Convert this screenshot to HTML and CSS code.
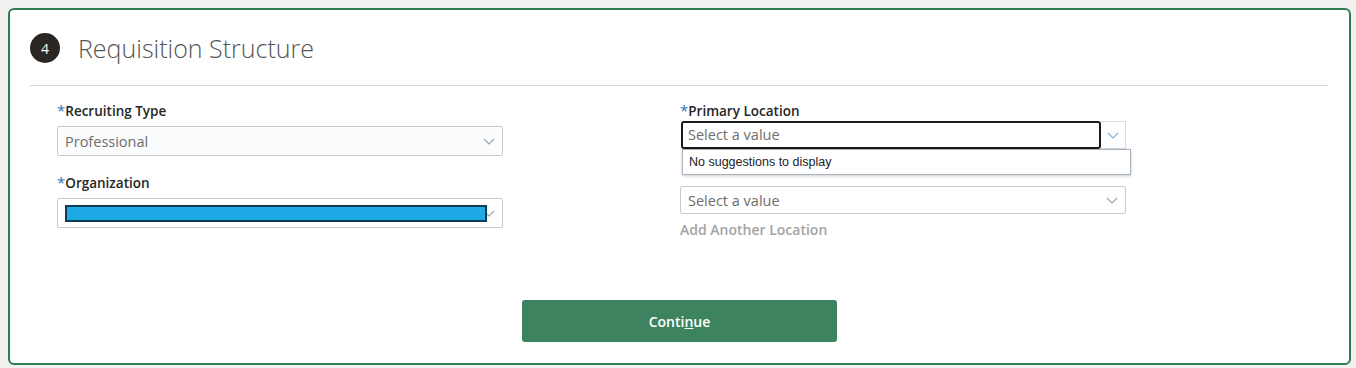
FILE: index.html
```html
<!DOCTYPE html>
<html lang="en">
<head>
    <meta charset="UTF-8">
    <meta name="viewport" content="width=device-width, initial-scale=1.0">
    <title>Requisition Structure</title>
    <link rel="stylesheet" href="styles.css">
</head>
<body>

    <div class="card">
        <div class="header">
            <span class="step">4</span>
            <h2>Requisition Structure</h2>
        </div>
        <div class="divider"></div>

        <div class="fields">
            <div class="column">
                <label class="label"><span class="req">*</span>Recruiting Type</label>
                <div class="select readonly">
                    <span class="value">Professional</span>
                    <span class="chevron"><svg width="12" height="7" viewBox="0 0 12 7"><path d="M1 1l5 5 5-5" fill="none" stroke="#9aa3ab" stroke-width="1.2"/></svg></span>
                </div>

                <label class="label second"><span class="req">*</span>Organization</label>
                <div class="select">
                    <span class="redacted"></span>
                    <span class="chevron"><svg width="12" height="7" viewBox="0 0 12 7"><path d="M1 1l5 5 5-5" fill="none" stroke="#9aa3ab" stroke-width="1.2"/></svg></span>
                </div>
            </div>

            <div class="column">
                <label class="label tight"><span class="req">*</span>Primary Location</label>
                <div class="combo">
                    <div class="focused">Select a value</div>
                    <span class="combo-btn"><svg width="12" height="7" viewBox="0 0 12 7"><path d="M1 1l5 5 5-5" fill="none" stroke="#7eb2dc" stroke-width="1.2"/></svg></span>
                    <div class="suggestions">No suggestions to display</div>
                </div>

                <div class="select short">
                    <span class="value">Select a value</span>
                    <span class="chevron"><svg width="12" height="7" viewBox="0 0 12 7"><path d="M1 1l5 5 5-5" fill="none" stroke="#9aa3ab" stroke-width="1.2"/></svg></span>
                </div>
                <a class="add-link">Add Another Location</a>
            </div>
        </div>

        <div class="actions">
            <button class="continue">Conti<u>n</u>ue</button>
        </div>
    </div>

</body>
</html>
```

FILE: styles.css
```css
body {
    font-family: "Open Sans", Arial, sans-serif;
    background-color: #f2f1ef;
    margin: 0;
    height: 368px;
    overflow: hidden;
}
.card {
    box-sizing: border-box;
    margin: 8px 5px 0 8px;
    height: 357px;
    background-color: #ffffff;
    border: 2px solid #2f7c53;
    border-radius: 6px;
}
.header {
    display: flex;
    align-items: center;
    padding: 22px 0 0 20px;
    height: 32px;
}
.step {
    display: flex;
    align-items: center;
    justify-content: center;
    width: 30px;
    height: 30px;
    border-radius: 50%;
    background-color: #2a2624;
    color: #ffffff;
    font-size: 14px;
}
h2 {
    margin: 0 0 0 18px;
    font-size: 25px;
    font-weight: 300;
    color: #555555;
}
.divider {
    margin: 21px 21px 0 20px;
    border-top: 1px solid #d8d8d8;
}
.fields {
    display: grid;
    grid-template-columns: 446px 446px;
    column-gap: 177px;
    padding: 14px 0 0 47px;
}
.column {
    display: flex;
    flex-direction: column;
    align-items: flex-start;
}
.label {
    font-size: 13.5px;
    font-weight: 600;
    line-height: 20px;
    color: #262626;
    margin-bottom: 5px;
}
.label.second {
    margin-top: 16px;
}
.label.tight {
    margin-bottom: 0;
}
.req {
    color: #2a77b6;
    font-size: 15px;
    font-weight: 400;
}
.select {
    box-sizing: border-box;
    display: flex;
    align-items: center;
    width: 446px;
    height: 30px;
    border: 1px solid #c4ccd3;
    border-radius: 2px;
    padding-left: 7px;
    background-color: #ffffff;
}
.select.readonly {
    background-color: #fbfcfd;
}
.select.short {
    height: 28px;
    margin-top: 37px;
}
.value {
    flex: 1;
    font-size: 14.5px;
    color: #6e6e6e;
}
.chevron {
    width: 26px;
    display: flex;
    justify-content: center;
}
.redacted {
    position: relative;
    z-index: 1;
    box-sizing: border-box;
    flex: 1;
    height: 17px;
    margin-right: -11px;
    background-color: #1eaae4;
    border: 2px solid #0b3c53;
}
.combo {
    position: relative;
    display: flex;
    width: 446px;
    height: 28px;
}
.focused {
    box-sizing: border-box;
    flex: 1;
    margin-left: 1px;
    border: 2px solid #1c1c1c;
    border-radius: 3px;
    padding-left: 5px;
    font-size: 14.5px;
    line-height: 24px;
    color: #6e6e6e;
}
.combo-btn {
    box-sizing: border-box;
    width: 25px;
    display: flex;
    align-items: center;
    justify-content: center;
    border: 1px solid #d5dbe0;
    border-left: none;
}
.suggestions {
    position: absolute;
    top: 28px;
    left: 2px;
    box-sizing: border-box;
    width: 449px;
    height: 26px;
    padding-left: 6px;
    background-color: #ffffff;
    border: 1px solid #a7b3bf;
    box-shadow: 0 1px 3px rgba(0, 0, 0, 0.2);
    font-family: "Liberation Sans", Arial, sans-serif;
    font-size: 12.5px;
    line-height: 24px;
    color: #222222;
}
.add-link {
    margin-top: 6px;
    font-size: 14px;
    font-weight: 600;
    line-height: 20px;
    color: #a3a3a3;
}
.actions {
    display: flex;
    justify-content: center;
    padding-top: 60px;
}
.continue {
    width: 315px;
    height: 42px;
    background-color: #3e8360;
    color: white;
    border: none;
    border-radius: 3px;
    font-family: "Open Sans", Arial, sans-serif;
    font-size: 14px;
    font-weight: 600;
    cursor: pointer;
}
```
